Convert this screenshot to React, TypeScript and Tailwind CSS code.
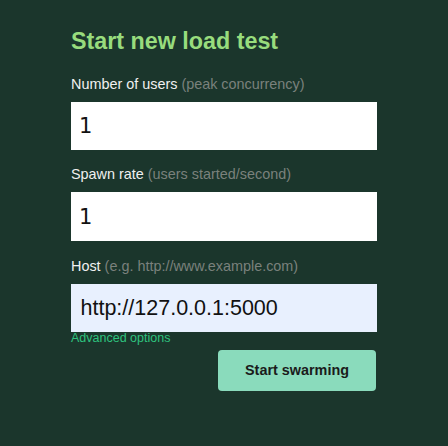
export default function App() {
  return (
    <div className="min-h-screen bg-[#1b362c] font-['Liberation_Sans',Arial,sans-serif]">
      <form className="mx-auto flex w-[306px] flex-col pt-[28px]" onSubmit={(e) => e.preventDefault()}>
        <h2 className="text-[23.3px] font-bold leading-[1.15] text-[#98dc7d]">Start new load test</h2>

        <label className="mt-[21px] text-[14.4px] leading-[1.15] text-[#f0f0f0]">
          Number of users <span className="text-[#7a817c]">(peak concurrency)</span>
        </label>
        <input
          type="number"
          defaultValue={1}
          className="mt-[9.5px] h-[48px] w-full bg-white pl-[8px] font-['DejaVu_Sans',sans-serif] text-[21px] text-[#111] outline-none [appearance:textfield]"
        />

        <label className="mt-[16px] text-[14.4px] leading-[1.15] text-[#f0f0f0]">
          Spawn rate <span className="text-[#7a817c]">(users started/second)</span>
        </label>
        <input
          type="number"
          defaultValue={1}
          className="mt-[10px] h-[49px] w-full bg-white pl-[8px] font-['DejaVu_Sans',sans-serif] text-[21px] text-[#111] outline-none [appearance:textfield]"
        />

        <label className="mt-[17px] text-[14.4px] leading-[1.15] text-[#f0f0f0]">
          Host <span className="text-[#7a817c]">(e.g. http://www.example.com)</span>
        </label>
        <input
          type="text"
          defaultValue="http://127.0.0.1:5000"
          className="mt-[9.5px] h-[48px] w-full bg-[#e8f0fe] pl-[9.5px] font-['Liberation_Sans',Arial,sans-serif] text-[21.5px] text-[#111] outline-none"
        />

        <a href="#" className="text-[12.5px] leading-none text-[#2ec27e]">
          Advanced options
        </a>

        <div className="mt-[5.5px] flex justify-end pr-px">
          <button
            type="submit"
            className="h-[41px] w-[158px] rounded-[4px] bg-[#8adbbc] font-['Liberation_Sans',Arial,sans-serif] text-[14.4px] font-bold text-[#1b1b1b]"
          >
            Start swarming
          </button>
        </div>
      </form>
    </div>
  );
}
